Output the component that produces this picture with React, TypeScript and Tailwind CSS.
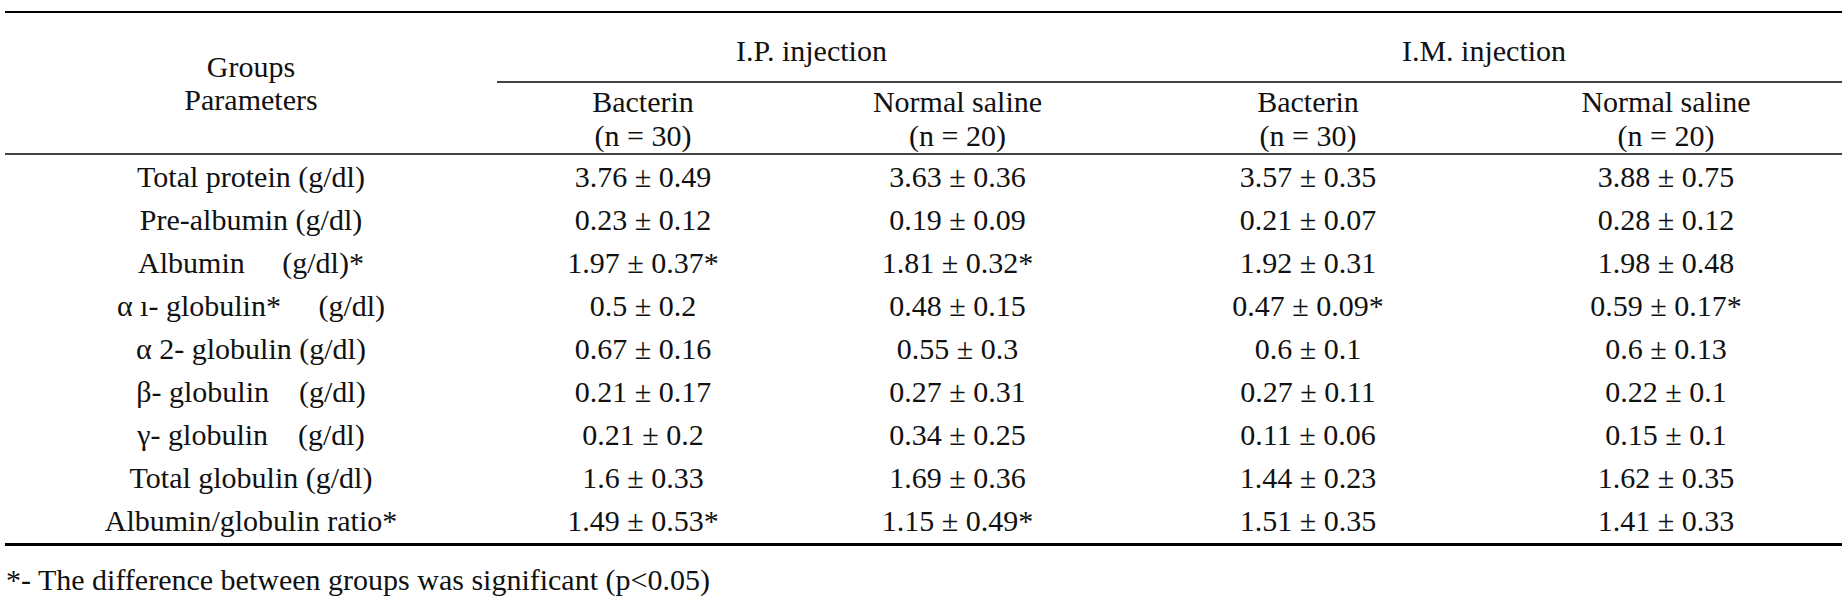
const rows = [
  { label: "Total protein (g/dl)", values: ["3.76 ± 0.49", "3.63 ± 0.36", "3.57 ± 0.35", "3.88 ± 0.75"] },
  { label: "Pre-albumin (g/dl)", values: ["0.23 ± 0.12", "0.19 ± 0.09", "0.21 ± 0.07", "0.28 ± 0.12"] },
  { label: "Albumin     (g/dl)*", values: ["1.97 ± 0.37*", "1.81 ± 0.32*", "1.92 ± 0.31", "1.98 ± 0.48"] },
  { label: "α ı- globulin*     (g/dl)", values: ["0.5 ± 0.2", "0.48 ± 0.15", "0.47 ± 0.09*", "0.59 ± 0.17*"] },
  { label: "α 2- globulin (g/dl)", values: ["0.67 ± 0.16", "0.55 ± 0.3", "0.6 ± 0.1", "0.6 ± 0.13"] },
  { label: "β- globulin    (g/dl)", values: ["0.21 ± 0.17", "0.27 ± 0.31", "0.27 ± 0.11", "0.22 ± 0.1"] },
  { label: "γ- globulin    (g/dl)", values: ["0.21 ± 0.2", "0.34 ± 0.25", "0.11 ± 0.06", "0.15 ± 0.1"] },
  { label: "Total globulin (g/dl)", values: ["1.6 ± 0.33", "1.69 ± 0.36", "1.44 ± 0.23", "1.62 ± 0.35"] },
  { label: "Albumin/globulin ratio*", values: ["1.49 ± 0.53*", "1.15 ± 0.49*", "1.51 ± 0.35", "1.41 ± 0.33"] }
];

const groups = [
  { name: "Bacterin", n: "(n = 30)" },
  { name: "Normal saline", n: "(n = 20)" },
  { name: "Bacterin", n: "(n = 30)" },
  { name: "Normal saline", n: "(n = 20)" }
];

const cols = "grid grid-cols-[492px_292px_337px_364px_352px]";

export default function App() {
  return (
    <div className="h-[603px] w-[1843px] overflow-hidden bg-white [font-family:Liberation_Serif,serif] text-[30px] text-[#111]">
      <div className="ml-[5px] w-[1837px]">
        <div className="mt-[11px] h-[2px] bg-black" />

        {/* header */}
        <div className={cols}>
          <div className="row-span-3 flex flex-col items-center justify-center leading-[33px]">
            <span>Groups</span>
            <span>Parameters</span>
          </div>
          <div className="col-span-2 flex h-[68px] items-center justify-center pt-[6px] leading-[35px]">
            I.P. injection
          </div>
          <div className="col-span-2 flex h-[68px] items-center justify-center pt-[6px] leading-[35px]">
            I.M. injection
          </div>
          <div className="col-span-4 h-[2px] bg-[#444]" />
          {groups.map((g, i) => (
            <div
              className="flex h-[70px] flex-col items-center pt-[2px] leading-[34px]"
              key={i}
            >
              <span>{g.name}</span>
              <span>{g.n}</span>
            </div>
          ))}
        </div>
        <div className="h-[2px] bg-[#444]" />

        {/* body */}
        {rows.map((row) => (
          <div className={cols} key={row.label}>
            <div className="flex h-[43px] items-center justify-center whitespace-pre">
              {row.label}
            </div>
            {row.values.map((v, i) => (
              <div className="flex h-[43px] items-center justify-center whitespace-pre" key={i}>
                {v}
              </div>
            ))}
          </div>
        ))}
        <div className="mt-[1px] h-[3px] bg-black" />
      </div>

      <p className="ml-[6px] mt-[16px] leading-[35px]">
        *- The difference between groups was significant (p&lt;0.05)
      </p>
    </div>
  );
}
